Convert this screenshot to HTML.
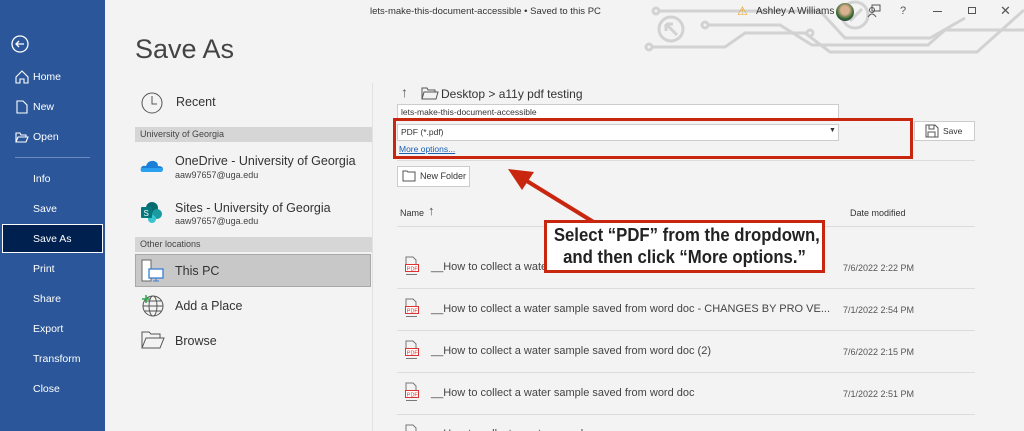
<!DOCTYPE html>
<html><head><meta charset="utf-8"><style>
*{margin:0;padding:0;box-sizing:border-box}
html,body{width:1024px;height:431px;overflow:hidden}
body{background:#f3f3f3;font-family:"Liberation Sans",sans-serif;position:relative;color:#333}
.a{position:absolute;white-space:nowrap}
#side{position:absolute;left:0;top:0;width:105px;height:431px;background:#2b579a}
.nav{position:absolute;left:33px;color:#fff;font-size:10.5px}
.lbl{font-size:12.5px;color:#333}
.sub{font-size:9px;color:#444}
.row{position:absolute;left:397px;width:578px;height:1px;background:#dcdcdc}
.fn{font-size:11px;color:#444}
.dt{font-size:9px;color:#555}
.pdf{position:absolute;width:16px;height:20px}
</style></head><body>
<svg class="a" style="left:0;top:0" width="1024" height="80">
<g fill="none" stroke="#d2d2d2" stroke-width="3">
<circle cx="656" cy="11" r="3"/><line x1="659" y1="11" x2="820" y2="11"/>
<circle cx="671" cy="29" r="12"/><path d="M677 35 L666 24 M666 24 h7 M666 24 v7"/>
<circle cx="705" cy="25" r="3"/><path d="M708 25 H780 L812 45 H928 L945 30 H1024"/>
<circle cx="649" cy="47" r="3"/><path d="M652 47 H725 L745 33 H805 L830 52 H977 L1024 10"/>
<circle cx="810" cy="33" r="3"/>
<path d="M820 11 L845 38 H930 L965 18"/>
<circle cx="855" cy="15" r="13"/><path d="M850 21 L862 9"/>
</g></svg>
<div id="side">
<svg class="a" style="left:11px;top:35px" width="18" height="18"><circle cx="9" cy="9" r="8" fill="none" stroke="#fff" stroke-width="1.3"/><path d="M13 9H5M8 6L5 9L8 12" stroke="#fff" fill="none" stroke-width="1.3"/></svg>
<svg class="a" style="left:15px;top:70px" width="14" height="14"><path d="M1 7L7 1L13 7V13H9V9H5V13H1Z" fill="none" stroke="#fff" stroke-width="1.1"/></svg>
<div class="nav" style="top:71px">Home</div>
<svg class="a" style="left:15px;top:100px" width="14" height="14"><path d="M2 1H8L12 5V13H2Z" fill="none" stroke="#fff" stroke-width="1.1"/></svg>
<div class="nav" style="top:101px">New</div>
<svg class="a" style="left:15px;top:130px" width="14" height="14"><path d="M1 12V3H5L6 5H11V7M1 12L3 7H13L11 12Z" fill="none" stroke="#fff" stroke-width="1.1"/></svg>
<div class="nav" style="top:131px">Open</div>
<div class="a" style="left:15px;top:157px;width:75px;height:1px;background:#6b8cc0"></div>
<div class="nav" style="top:173px">Info</div>
<div class="nav" style="top:203px">Save</div>
<div class="a" style="left:2px;top:224px;width:101px;height:29px;background:#002050;border:1px solid #fff"></div>
<div class="nav" style="top:233px">Save As</div>
<div class="nav" style="top:263px">Print</div>
<div class="nav" style="top:293px">Share</div>
<div class="nav" style="top:323px">Export</div>
<div class="nav" style="top:353px">Transform</div>
<div class="nav" style="top:383px">Close</div>
</div>
<div class="a" style="left:370px;top:6px;font-size:9.5px;color:#333">lets-make-this-document-accessible • Saved to this PC</div>
<div class="a" style="left:737px;top:4px;font-size:12px;color:#e8a020">⚠</div>
<div class="a" style="left:756px;top:6px;font-size:10px;color:#333">Ashley A Williams</div>
<div class="a" style="left:836px;top:3px;width:18px;height:18px;border-radius:50%;background:radial-gradient(circle at 50% 40%,#d9b090 30%,#3a6a30 60%,#1a2a50 90%)"></div>
<svg class="a" style="left:867px;top:4px" width="14" height="14"><rect x="5" y="1" width="8" height="6" fill="none" stroke="#555"/><circle cx="5" cy="6" r="2.5" fill="none" stroke="#555"/><path d="M1 13Q5 7 9 13" fill="none" stroke="#555"/></svg>
<div class="a" style="left:900px;top:5px;font-size:11px;color:#555">?</div>
<div class="a" style="left:933px;top:11px;width:9px;height:1px;background:#555"></div>
<div class="a" style="left:968px;top:7px;width:8px;height:7px;border:1px solid #555"></div>
<div class="a" style="left:1000px;top:3px;font-size:13px;color:#555">✕</div>
<div class="a" style="left:135px;top:34px;font-size:27px;color:#444;font-weight:300">Save As</div>
<div class="a" style="left:372px;top:83px;width:1px;height:348px;background:#e2e2e2"></div>
<svg class="a" style="left:141px;top:92px" width="22" height="22"><circle cx="11" cy="11" r="10" fill="none" stroke="#555" stroke-width="1"/><path d="M11 4V12H16" fill="none" stroke="#555"/></svg>
<div class="a lbl" style="left:176px;top:95px">Recent</div>
<div class="a" style="left:135px;top:127px;width:237px;height:15px;background:#d6d6d6"></div>
<div class="a sub" style="left:140px;top:129px">University of Georgia</div>
<svg class="a" style="left:140px;top:156px" width="24" height="18"><path d="M3 16Q0 16 1 12Q2 9 6 10Q8 4 14 5Q18 6 18 10Q23 10 23 13Q23 16 20 16Z" fill="#1a7fd6"/><path d="M3 16Q0 16 1 12H23Q23 16 20 16Z" fill="#2aa0f0"/></svg>
<div class="a lbl" style="left:175px;top:154px">OneDrive - University of Georgia</div>
<div class="a sub" style="left:175px;top:170px">aaw97657@uga.edu</div>
<svg class="a" style="left:140px;top:201px" width="24" height="22"><circle cx="12" cy="7" r="6" fill="#036c70"/><circle cx="17" cy="13" r="5" fill="#1a9ba1"/><circle cx="12" cy="18" r="4" fill="#37c6d0"/><rect x="1" y="6" width="11" height="11" rx="1" fill="#03787c"/><text x="3.5" y="15" font-size="8" fill="#fff" font-family="Liberation Sans">S</text></svg>
<div class="a lbl" style="left:175px;top:201px">Sites - University of Georgia</div>
<div class="a sub" style="left:175px;top:216px">aaw97657@uga.edu</div>
<div class="a" style="left:135px;top:237px;width:237px;height:15px;background:#d6d6d6"></div>
<div class="a sub" style="left:140px;top:239px">Other locations</div>
<div class="a" style="left:135px;top:254px;width:236px;height:33px;background:#c8c8c8;border:1px solid #a8a8a8"></div>
<svg class="a" style="left:141px;top:259px" width="24" height="24"><rect x="1" y="1" width="9" height="21" fill="#fff" stroke="#666"/><rect x="8" y="10" width="14" height="9" fill="#fff" stroke="#3a7ed0" stroke-width="1.3"/><path d="M15 19V22M12 22H18" stroke="#3a7ed0"/></svg>
<div class="a lbl" style="left:175px;top:264px">This PC</div>
<svg class="a" style="left:141px;top:294px" width="24" height="24"><circle cx="12" cy="12" r="10" fill="none" stroke="#555"/><ellipse cx="12" cy="12" rx="4" ry="10" fill="none" stroke="#555"/><path d="M2 12H22M4 7H20M4 17H20" stroke="#555" fill="none"/><path d="M5 1V9M1 5H9" stroke="#2ba84a" stroke-width="1.5"/></svg>
<div class="a lbl" style="left:175px;top:299px">Add a Place</div>
<svg class="a" style="left:141px;top:330px" width="24" height="20"><path d="M1 18V2H8L10 4H19V8M1 18L5 8H23L19 18Z" fill="none" stroke="#555"/></svg>
<div class="a lbl" style="left:175px;top:334px">Browse</div>
<div class="a" style="left:401px;top:84px;font-size:14px;color:#555">↑</div>
<svg class="a" style="left:421px;top:87px" width="18" height="14"><path d="M1 12V1H6L7 3H14V5M1 12L3 5H17L15 12Z" fill="none" stroke="#555"/></svg>
<div class="a" style="left:441px;top:87px;font-size:12px;color:#333">Desktop &gt; a11y pdf testing</div>
<div class="a" style="left:397px;top:104px;width:442px;height:16px;background:#fff;border:1px solid #ccc"></div>
<div class="a" style="left:401px;top:107px;font-size:8.5px;color:#333">lets-make-this-document-accessible</div>
<div class="a" style="left:397px;top:124px;width:442px;height:17px;background:#fff;border:1px solid #ccc"></div>
<div class="a" style="left:401px;top:127px;font-size:8.5px;color:#333">PDF (*.pdf)</div>
<div class="a" style="left:829px;top:127px;font-size:7px;color:#333">▼</div>
<div class="a" style="left:399px;top:144px;font-size:8.5px;color:#1a5fb4;text-decoration:underline">More options...</div>
<div class="a" style="left:393px;top:118px;width:520px;height:41px;border:3px solid #c8260f"></div>
<div class="a" style="left:914px;top:121px;width:61px;height:20px;background:#fff;border:1px solid #ccc"></div>
<svg class="a" style="left:925px;top:124px" width="14" height="14"><path d="M1 1H10L13 4V13H1Z M4 1V5H9V1 M3 13V8H10V13" fill="none" stroke="#555"/></svg>
<div class="a" style="left:943px;top:126px;font-size:8.5px;color:#333">Save</div>
<div class="row" style="top:160px"></div>
<div class="a" style="left:397px;top:166px;width:73px;height:21px;background:#fff;border:1px solid #ccc"></div>
<svg class="a" style="left:402px;top:170px" width="14" height="12"><path d="M1 11V1H5L6 2H13V11Z" fill="none" stroke="#555"/></svg>
<div class="a" style="left:420px;top:171px;font-size:9px;color:#333">New Folder</div>
<div class="a" style="left:400px;top:208px;font-size:9px;color:#333">Name</div>
<div class="a" style="left:428px;top:203px;font-size:13px;color:#555">↑</div>
<div class="a" style="left:850px;top:208px;font-size:9px;color:#333">Date modified</div>
<div class="row" style="top:226px"></div>
<div class="row" style="top:288px"></div><div class="row" style="top:330px"></div><div class="row" style="top:372px"></div><div class="row" style="top:414px"></div>
<svg width="0" height="0" style="position:absolute"><defs><g id="p"><path d="M1 8V1H8L11 4V8" fill="none" stroke="#777"/><rect x="0.5" y="8.5" width="13" height="7" fill="#fff" stroke="#d33"/><text x="1.8" y="14.5" font-size="5.5" fill="#d33" font-family="Liberation Sans">PDF</text><path d="M1 18.5H12" stroke="#777"/></g></defs></svg>
<svg class="pdf" style="left:405px;top:256px"><use href="#p"/></svg>
<svg class="pdf" style="left:405px;top:298px"><use href="#p"/></svg>
<svg class="pdf" style="left:405px;top:340px"><use href="#p"/></svg>
<svg class="pdf" style="left:405px;top:382px"><use href="#p"/></svg>
<svg class="pdf" style="left:405px;top:424px"><use href="#p"/></svg>
<div class="a fn" style="left:431px;top:261px">__How to collect a water sample</div>
<div class="a fn" style="left:431px;top:303px">__How to collect a water sample saved from word doc - CHANGES BY PRO VE...</div>
<div class="a fn" style="left:431px;top:345px">__How to collect a water sample saved from word doc (2)</div>
<div class="a fn" style="left:431px;top:387px">__How to collect a water sample saved from word doc</div>
<div class="a fn" style="left:431px;top:428px">__How to collect a water sample</div>
<div class="a dt" style="left:843px;top:263px">7/6/2022 2:22 PM</div>
<div class="a dt" style="left:843px;top:305px">7/1/2022 2:54 PM</div>
<div class="a dt" style="left:843px;top:347px">7/6/2022 2:15 PM</div>
<div class="a dt" style="left:843px;top:389px">7/1/2022 2:51 PM</div>
<svg class="a" style="left:500px;top:160px" width="120" height="70"><path d="M100 66L22 18" stroke="#c8260f" stroke-width="4"/><path d="M8 9L34 12L22 30Z" fill="#c8260f"/></svg>
<div class="a" style="left:544px;top:220px;width:281px;height:53px;background:#fff;border:3px solid #c8260f;text-align:center;color:#222"></div>
<div class="a" style="left:544px;top:224px;width:281px;text-align:center;font-size:18px;line-height:22px;color:#222;font-weight:bold;transform:scaleX(0.93);transform-origin:center">Select “PDF” from the dropdown,<br>and then click “More options.”</div>
</body></html>
